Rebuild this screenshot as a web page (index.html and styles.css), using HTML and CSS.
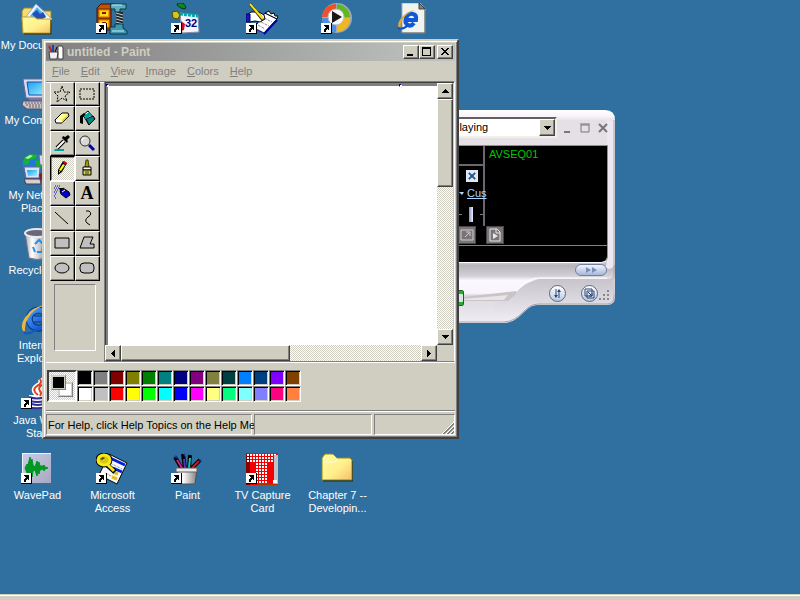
FILE: index.html
```
<!DOCTYPE html>
<html lang="en">
<head>
    <meta charset="UTF-8">
    <meta name="viewport" content="width=device-width, initial-scale=1.0">
    <title>Desktop</title>
    <link rel="stylesheet" href="styles.css">
</head>
<body>

    <svg class="defs" width="0" height="0">
        <defs>
            <linearGradient id="blueGlass" x1="0" y1="0" x2="1" y2="1">
                <stop offset="0" stop-color="#18a0f0"/><stop offset="1" stop-color="#a0f0ff"/>
            </linearGradient>
            <linearGradient id="folderFill" x1="0" y1="0" x2="1" y2="1">
                <stop offset="0" stop-color="#fffca0"/><stop offset=".55" stop-color="#fff08c"/><stop offset="1" stop-color="#f4c068"/>
            </linearGradient>
            <linearGradient id="metal" x1="0" y1="0" x2="1" y2="0">
                <stop offset="0" stop-color="#a8a8a8"/><stop offset=".3" stop-color="#fff"/><stop offset="1" stop-color="#808080"/>
            </linearGradient>
            <linearGradient id="waveFill" x1="0" y1="0" x2="1" y2="1">
                <stop offset="0" stop-color="#c8cce8"/><stop offset="1" stop-color="#a8a8c0"/>
            </linearGradient>
            <linearGradient id="eBlue" x1="0" y1="0" x2="1" y2="1">
                <stop offset="0" stop-color="#48a0f8"/><stop offset="1" stop-color="#0848c8"/>
            </linearGradient>
            <pattern id="holes" width="3" height="3" patternUnits="userSpaceOnUse">
                <rect x="1" y="1" width="2" height="2" fill="#fff" shape-rendering="crispEdges"/>
            </pattern>
            <symbol id="shortcut" viewBox="0 0 11 11">
                <rect width="11" height="11" fill="#000"/>
                <rect width="10" height="10" fill="#fff"/>
                <path d="M3 2h5v5h-1v-1h-1v1h-1v2h-2v-3h1v-1h1v-1h-1v-1h-1z" fill="#000"/>
            </symbol>
            <symbol id="arrow-up" viewBox="0 0 7 4"><path d="M3 0h1v1h1v1h1v1h1v1h-7v-1h1v-1h1v-1h1z"/></symbol>
            <symbol id="arrow-down" viewBox="0 0 7 4"><path d="M0 0h7v1h-1v1h-1v1h-1v1h-1v-1h-1v-1h-1v-1h-1z"/></symbol>
            <symbol id="arrow-left" viewBox="0 0 4 7"><path d="M4 0v7h-1v-1h-1v-1h-1v-1h-1v-1h1v-1h1v-1h1v-1z"/></symbol>
            <symbol id="arrow-right" viewBox="0 0 4 7"><path d="M0 0v7h1v-1h1v-1h1v-1h1v-1h-1v-1h-1v-1h-1v-1z"/></symbol>
        </defs>
    </svg>

    <main class="desktop">
        <div class="column">
            <a class="icon" href="#">
                <svg viewBox="0 0 32 32">
                    <path d="M1 8l2-3h8l2 3h17v10H1z" fill="#f8dc70" stroke="#a08020"/>
                    <path d="M15 1L31 16l-10 6L4 15z" fill="#f0f8ff" stroke="#90a8d8"/>
                    <path d="M16 4l9 9-7 5-9-5z" fill="#50b0f0"/>
                    <path d="M11 11l5-4 3 4 3-2 3 5-7 4z" fill="#2050b8"/>
                    <path d="M1 14h12l3 2h14l-1 14H2z" fill="url(#folderFill)" stroke="#c8a028"/>
                    <path d="M3 31h27V17" fill="none" stroke="#403000"/>
                </svg>
                <span class="label">My&nbsp;Documents</span>
            </a>
            <a class="icon" href="#">
                <svg viewBox="0 0 32 32">
                    <path d="M2 1h26l3 2-2 17H5z" fill="#d8d8f0" stroke="#686890"/>
                    <path d="M6 4h20l-2 13H8z" fill="url(#blueGlass)" stroke="#1850a8"/>
                    <path d="M8 20h16v3H8z" fill="#7878a0"/>
                    <path d="M2 23h28v6l-3 2H6l-5-4z" fill="#d0c8c0" stroke="#504870"/>
                    <path d="M4 25h20M5 27h20M8 29h17" stroke="#605878" stroke-dasharray="2 1"/>
                </svg>
                <span class="label">My Computer</span>
            </a>
            <a class="icon" href="#">
                <svg viewBox="0 0 32 32">
                    <circle cx="11" cy="11" r="10" fill="#2078d8"/>
                    <path d="M3 5l6-4 8 1-3 4-5 1-2 5-5-1zM14 8l5-1 2 6-5 3zM2 15l4 0 2 6-3-1z" fill="#18b030"/>
                    <path d="M4 5l5-3 3 1-5 3z" fill="#b0f8a0"/>
                    <path d="M18 2h13v10H19z" fill="#d8d8f0" stroke="#686890"/>
                    <path d="M3 14h16l-1 11H5z" fill="#e0e0f4" stroke="#686890"/>
                    <path d="M6 17h10v6H7z" fill="url(#blueGlass)"/>
                    <path d="M3 26h16l1 5H5z" fill="#d8d0c8" stroke="#403860"/>
                    <path d="M18 21l6-2-1 8h-4z" fill="#802020"/>
                </svg>
                <span class="label">My Network Places</span>
            </a>
            <a class="icon" href="#">
                <svg viewBox="0 0 32 32">
                    <path d="M4 5l4 25q9 3 16 0l4-25z" fill="url(#metal)" stroke="#707088"/>
                    <ellipse cx="16" cy="5" rx="12" ry="4" fill="#686878" stroke="#e8e8f0" stroke-width="2"/>
                    <path d="M14 16l4-4 4 4M22 18l-1 6-5 0M14 24l-2-5" fill="none" stroke="#2090f0" stroke-width="2"/>
                </svg>
                <span class="label">Recycle Bin</span>
            </a>
            <a class="icon" href="#">
                <svg viewBox="0 0 32 32">
                    <path d="M25 20q-3 6-9 5-7-1-8-9 1-8 9-9 8 0 9 9H12" fill="none" stroke="#08348c" stroke-width="7"/>
                    <path d="M25 20q-3 6-9 5-7-1-8-9 1-8 9-9 8 0 9 9H12" fill="none" stroke="url(#eBlue)" stroke-width="5"/>
                    <path d="M2 28Q-2 20 8 10 16 2 26 2q-10 2-16 9Q3 20 4 28z" fill="#e8b840"/>
                    <path d="M3 30q5 2 13-4" fill="none" stroke="#1058c8" stroke-width="2"/>
                </svg>
                <span class="label">Internet Explorer</span>
            </a>
            <a class="icon" href="#">
                <svg viewBox="0 0 32 32">
                    <path d="M19 1q3 4-3 7-6 4 1 9M23 6q-7 3-4 7 2 2 0 5" fill="none" stroke="#fff" stroke-width="5"/>
                    <path d="M8 17h18l5 2-3 7-4 5H5l3-7z" fill="#fff"/>
                    <path d="M19 1q3 4-3 7-6 4 1 9M23 6q-7 3-4 7 2 2 0 5" fill="none" stroke="#e04020" stroke-width="2"/>
                    <path d="M8 19q8 3 16 0M9 23q8 2 14 0M11 26q6 2 11 0M5 29q14 3 23-1M24 19q7 0 1 6" fill="none" stroke="#303090" stroke-width="2"/>
                    <use href="#shortcut" x="0" y="20" width="11" height="11"/>
                </svg>
                <span class="label">Java Web<br>Start</span>
            </a>
            <a class="icon" href="#">
                <svg viewBox="0 0 32 32">
                    <rect x="1" y="0" width="30" height="31" fill="#606080"/>
                    <rect x="1" y="0" width="29" height="30" fill="#f0f0ff"/>
                    <rect x="2" y="1" width="28" height="29" fill="url(#waveFill)"/>
                    <path d="M4 15L6 11 7 12 9 4 10 8 11 6 12 12 14 14 16 8 17 11 18 9 19 13 22 13 23 12 24 14 27 15 24 16 23 18 22 16 19 17 18 21 17 19 16 23 14 17 12 18 11 24 10 21 9 26 7 19 6 20z" fill="#009820" stroke="#009820"/>
                    <use href="#shortcut" x="0" y="20" width="11" height="11"/>
                </svg>
                <span class="label">WavePad</span>
            </a>
        </div>

        <div class="column">
            <a class="icon" href="#" aria-label="Archive tool">
                <svg viewBox="0 0 32 32">
                    <path d="M1 5l4-4h13l-3 4v22H1z" fill="#c85000" stroke="#401000"/>
                    <path d="M2 6h12v9H2zM2 16h12v9H2z" fill="#f0a000" stroke="#702000"/>
                    <path d="M4 8h8v5H4zM4 18h8v5H4z" fill="#ffd820"/>
                    <path d="M6 10h4M6 20h4" stroke="#702000" stroke-width="2"/>
                    <path d="M14 1h16v5h-6v3h-5V6h-4z" fill="#60b0c0" stroke="#083848"/>
                    <path d="M20 9h7v12h-7z" fill="#202830"/>
                    <path d="M20 10l7 2M20 13l7 2M20 16l7 2M20 19l7 2" stroke="#c0d0d8"/>
                    <path d="M14 24h5v-3h8v4l4 3v3H14z" fill="#4098b0" stroke="#083848"/>
                    <path d="M16 2h10M16 28h12" stroke="#b8f0f8"/>
                    <use href="#shortcut" x="0" y="20" width="11" height="11"/>
                </svg>
            </a>
            <a class="icon" href="#">
                <svg viewBox="0 0 32 32">
                    <path d="M13 1l18 9-10 21-18-9z" fill="#f8f8f8" stroke="#000"/>
                    <path d="M14 5l15 7M17 15l9 4" stroke="#0020e0" stroke-width="3"/>
                    <path d="M14 10l12 6M9 20l8 4" stroke="#a0a0a0" stroke-dasharray="3 1"/>
                    <path d="M17 19l5 2M16 24l5 2" stroke="#e0c020" stroke-width="3"/>
                    <path d="M10 11l9 8M15 18l2-3" stroke="#000" stroke-width="5"/>
                    <ellipse cx="8" cy="7" rx="6" ry="5" fill="none" stroke="#000" stroke-width="5"/>
                    <path d="M10 10l8 8M15 17l2-2" stroke="#f8e818" stroke-width="3"/>
                    <ellipse cx="8" cy="7" rx="6" ry="5" fill="#d8c810" stroke="#f8e818" stroke-width="3"/>
                    <path d="M4 6l3-2 2 1-3 2z" fill="#504800"/>
                    <use href="#shortcut" x="0" y="20" width="11" height="11"/>
                </svg>
                <span class="label">Microsoft Access</span>
            </a>
        </div>

        <div class="column">
            <a class="icon" href="#" aria-label="Calendar">
                <svg viewBox="0 0 32 32">
                    <path d="M23 28h9l-5 3z" fill="#506888"/>
                    <path d="M9 10l18 2 1 17-17 1z" fill="#f4f4ff" stroke="#8890a8"/>
                    <path d="M9 11l18 2" stroke="#00a8a8" stroke-width="3" stroke-dasharray="3 1"/>
                    <path d="M7 0l5 0 3 4-1 2-4-1-4-3z" fill="#108820" stroke="#003808"/>
                    <path d="M1 9l5-1 3 4-2 4-5-1z" fill="#d0c820" stroke="#504800"/>
                    <path d="M10 18l4 3-1 6-3 1z" fill="#c01020"/>
                    <text class="day" x="14" y="24">32</text>
                    <use href="#shortcut" x="0" y="20" width="11" height="11"/>
                </svg>
            </a>
            <a class="icon" href="#">
                <svg viewBox="0 0 32 32">
                    <path d="M11 16L4 4M14 16l-2-15M18 16l1-14M20 16l9-9" stroke="#000" stroke-width="4"/>
                    <path d="M11 15L6 7" stroke="#d02080" stroke-width="2"/>
                    <path d="M14 15l-1-9" stroke="#6030c0" stroke-width="2"/>
                    <path d="M18 15l1-10" stroke="#20c0c0" stroke-width="2"/>
                    <path d="M21 15l7-7" stroke="#c02020" stroke-width="2"/>
                    <path d="M3 4l2-2 2 4zM12 1l2 0 0 3zM28 6l3 1-2 2z" fill="#2030b0"/>
                    <path d="M6 17h20l-2 14H9z" fill="url(#metal)" stroke="#505050"/>
                    <path d="M5 15h21v4H5z" fill="#e8e8e8" stroke="#606060"/>
                    <use href="#shortcut" x="0" y="20" width="11" height="11"/>
                </svg>
                <span class="label">Paint</span>
            </a>
        </div>

        <div class="column">
            <a class="icon" href="#" aria-label="Notes">
                <svg viewBox="0 0 32 32">
                    <path d="M19 10l12 6-13 14-10-5z" fill="#fff" stroke="#000080"/>
                    <path d="M31 17L18 31" stroke="#0000a0" stroke-width="2"/>
                    <path d="M18 15l8 4M15 19l8 4M12 22l7 4" stroke="#909090" stroke-dasharray="3 1"/>
                    <path d="M19 10l4-2 2 3 3-1 1 3 3 0-1 3z" fill="#fff" stroke="#000"/>
                    <path d="M1 12l4-3h8l5 3 1 4-5 3-5-1-5 1-4-2z" fill="#fff" stroke="#000"/>
                    <path d="M0 11h4v8H0z" fill="#1818c0" stroke="#000060"/>
                    <path d="M4 1l13 16" stroke="#302800" stroke-width="3"/>
                    <path d="M4 1l13 15" stroke="#f8e020" stroke-width="2"/>
                    <use href="#shortcut" x="0" y="20" width="11" height="11"/>
                </svg>
            </a>
            <a class="icon" href="#">
                <svg viewBox="0 0 32 32">
                    <rect width="32" height="32" fill="#f00000"/>
                    <rect width="4" height="32" fill="#880000"/>
                    <rect x="0" y="0" width="30" height="9" fill="url(#holes)"/>
                    <rect x="9" y="9" width="12" height="22" fill="url(#holes)"/>
                    <path d="M28 2h4v29h-4z" fill="#c0c0c8"/>
                    <path d="M27 27h4v4h-4z" fill="#fff"/>
                    <path d="M0 0h32M11 31h20" stroke="#806000"/>
                    <use href="#shortcut" x="0" y="20" width="11" height="11"/>
                </svg>
                <span class="label">TV Capture<br>Card</span>
            </a>
        </div>

        <div class="column">
            <a class="icon" href="#" aria-label="Media Player">
                <svg viewBox="0 0 32 32">
                    <circle cx="16" cy="15" r="15" fill="#a0a8b0"/>
                    <path d="M15 14V1A14 14 0 0 0 1 14z" fill="#f05028"/>
                    <path d="M16 14V1A14 14 0 0 1 29 14z" fill="#60b820"/>
                    <path d="M15 15v14A14 14 0 0 1 1 15z" fill="#4890e8"/>
                    <path d="M16 15v14A14 14 0 0 0 29 15z" fill="#f0b820"/>
                    <circle cx="15" cy="14" r="8" fill="#f8f8f8" stroke="#b0b8c0"/>
                    <path d="M11 8l10 6-10 6z" fill="#181818"/>
                    <use href="#shortcut" x="0" y="20" width="11" height="11"/>
                </svg>
            </a>
            <a class="icon" href="#">
                <svg viewBox="0 0 32 32">
                    <path d="M1 27V5l3-4h8l4 4h13l2 2v20z" fill="url(#folderFill)" stroke="#908818"/>
                    <path d="M2 9h12l3-3" fill="none" stroke="#fffce0"/>
                    <path d="M2 28h30V8" fill="none" stroke="#302800"/>
                </svg>
                <span class="label">Chapter 7 --<br>Developin...</span>
            </a>
        </div>

        <div class="column">
            <a class="icon" href="#" aria-label="Web page">
                <svg viewBox="0 0 32 32">
                    <path d="M6 0h18l5 6v24H6z" fill="#f0f4f0" stroke="#b0b0b0"/>
                    <path d="M23 0l6 6h-6z" fill="#808088" stroke="#404040"/>
                    <path d="M29 7v23H6" fill="none" stroke="#606060"/>
                    <path d="M18 20q-3 4-6 2-4-2-2-7 2-5 7-4 4 1 3 6H9" fill="none" stroke="#1058d8" stroke-width="4"/>
                    <path d="M3 25Q0 21 6 14q6-6 13-7-8 3-12 9-3 5-2 9z" fill="#e0a838"/>
                    <path d="M2 25q5 2 10-3" fill="none" stroke="#1050c8" stroke-width="2"/>
                </svg>
            </a>
        </div>

        <section class="player">
            <svg class="skin" viewBox="0 0 200 213">
                <defs>
                    <linearGradient id="skinFill" x1="0" y1="0" x2="0" y2="213" gradientUnits="userSpaceOnUse">
                        <stop offset="0" stop-color="#fff"/>
                        <stop offset=".03" stop-color="#f8f4fa"/>
                        <stop offset=".05" stop-color="#e4e0e6"/>
                        <stop offset=".7" stop-color="#e4e0e8"/>
                        <stop offset=".73" stop-color="#b8b4bc"/>
                        <stop offset=".78" stop-color="#d4d0d6"/>
                        <stop offset=".8" stop-color="#fcf8ff"/>
                        <stop offset=".86" stop-color="#f8f4fc"/>
                        <stop offset=".87" stop-color="#dcd8e0"/>
                        <stop offset="1" stop-color="#f0ecf4"/>
                    </linearGradient>
                    <linearGradient id="podFill" x1="0" y1="0" x2="0" y2="1">
                        <stop offset="0" stop-color="#c4c0c8"/><stop offset="1" stop-color="#f0ecf4"/>
                    </linearGradient>
                </defs>
                <path d="M0 0h190q10 0 10 10v177q0 8-8 8h-69C109 195 106 213 88 213H0z" fill="url(#skinFill)"/>
                <path d="M192 10v142q0 3-3 6l6 1q5-2 5-8V11z" fill="#ece8f2"/>
                <path d="M199 10v177q0 7-7 7h-69C109 194 106 212 88 212H0" fill="none" stroke="#a8a4ac"/>
                <path d="M78 194q14-3 22-11 12-12 24-14h68q6 0 6-4v22q0 6-6 6h-70q-8 0-14 7-8 9-18 11-10 1-12-17z" fill="url(#podFill)"/>
                <path d="M88 190q10-5 16-12 9-10 20-10h68" fill="none" stroke="#fff"/>
                <path d="M48 187l53-6v3l-8 7H48z" fill="#c8c4c8"/>
                <path d="M48 189l45-4-4 5H48z" fill="#e8e4e8"/>
                <g fill="#888">
                    <path d="M192 180h2v2h-2zM192 184h2v2h-2zM188 184h2v2h-2zM192 188h2v2h-2zM188 188h2v2h-2zM184 188h2v2h-2z"/>
                </g>
            </svg>

            <div class="player-head">
                <div class="select">
                    <select aria-label="View"><option>Now Playing</option></select>
                    <span class="select-arrow"><svg class="arrow" width="7" height="4"><use href="#arrow-down"/></svg></span>
                </div>
                <div class="player-buttons">
                    <button aria-label="Minimize"><svg viewBox="0 0 12 12"><path d="M3 10h6" stroke="#777" stroke-width="2"/></svg></button>
                    <button aria-label="Maximize"><svg viewBox="0 0 12 12"><path d="M2 3h8v7H2z" fill="none" stroke="#777"/><path d="M1 2h10" stroke="#777"/></svg></button>
                    <button aria-label="Close"><svg viewBox="0 0 12 12"><path d="M2 2l8 8M10 2l-8 8" stroke="#777" stroke-width="2"/></svg></button>
                </div>
            </div>

            <div class="screen">
                <div class="screen-top">
                    <div class="video">
                        <div class="video-title"></div>
                        <div class="enhance">
                            <button class="enhance-close" aria-label="Close panel"><svg viewBox="0 0 11 11"><path d="M2 2l7 7M9 2l-7 7" stroke="#205080" stroke-width="2"/></svg></button>
                            <a class="custom" href="#"><svg width="5" height="3"><path d="M0 0h5l-2 3z" fill="#a8d8ff"/></svg><u>Cus</u></a>
                            <div class="slider"><span class="tick"></span><span class="thumb"></span><span class="tick"></span></div>
                        </div>
                    </div>
                    <div class="playlist">AVSEQ01</div>
                </div>
                <div class="screen-tools">
                    <button aria-label="Full screen"><svg viewBox="0 0 16 16"><path d="M2 3h12v10H2zM6 10l4-4M7 5h4v4" fill="none" stroke="#d0ccd0"/></svg></button>
                    <button aria-label="Playlist"><svg viewBox="0 0 16 16"><path d="M3 2h7l3 3v9H3zM9 2v4h4" fill="none" stroke="#e8e8e8"/><path d="M6 6l5 3-5 3z" fill="#e8e8e8"/></svg></button>
                </div>
                <div class="screen-status"></div>
            </div>

            <div class="player-foot">
                <button class="fast" aria-label="Fast forward"><svg width="11" height="6"><path d="M0 0l5 3-5 3zM6 0l5 3-5 3z" fill="#7890b8"/></svg></button>
                <div class="foot-row">
                    <span class="volume"></span>
                    <button class="round" aria-label="Equalizer"><svg viewBox="0 0 11 11"><path d="M4 1v8M7 2v8" stroke="#304878" fill="none"/><path d="M2 7h4l-2 3zM5 4h4l-2-3z" fill="#304878"/></svg></button>
                    <button class="round" aria-label="Skin mode"><svg viewBox="0 0 11 11"><path d="M1 1h7v7H1zM3 3h7v7H3zM4 4l4 4M8 5v3H5" fill="none" stroke="#304878"/></svg></button>
                </div>
            </div>
        </section>

        <section class="paint">
            <header class="titlebar">
                <svg class="app-icon" viewBox="0 0 16 16">
                    <path d="M4 8L1 2" stroke="#c02020" stroke-width="2"/>
                    <path d="M5 8V1" stroke="#2040c0" stroke-width="2"/>
                    <path d="M7 8l2-5" stroke="#000"/>
                    <path d="M10 2h4l1 2v11h-5z" fill="#fff" stroke="#404040"/>
                    <path d="M1 8h9l-1 7H2z" fill="#f0f0f0" stroke="#404040"/>
                </svg>
                <h1>untitled - Paint</h1>
                <button aria-label="Minimize"><svg viewBox="0 0 12 10"><path d="M2 7h6v2H2z"/></svg></button>
                <button aria-label="Maximize"><svg viewBox="0 0 12 10"><path d="M1 0h9v9H1zM2 2v6h7V2z" fill-rule="evenodd"/></svg></button>
                <button class="close" aria-label="Close"><svg viewBox="0 0 12 10"><path d="M2 1h2v1h1v1h2v-1h1v-1h2v1h-1v1h-1v1h-1v1h1v1h1v1h1v1h-2v-1h-1v-1h-2v1h-1v1h-2v-1h1v-1h1v-1h1v-1h-1v-1h-1v-1h-1z"/></svg></button>
            </header>

            <nav class="menu">
                <a href="#"><u>F</u>ile</a>
                <a href="#"><u>E</u>dit</a>
                <a href="#"><u>V</u>iew</a>
                <a href="#"><u>I</u>mage</a>
                <a href="#"><u>C</u>olors</a>
                <a href="#"><u>H</u>elp</a>
            </nav>

            <div class="workspace">
                <div class="toolbox">
                    <div class="tools">
                        <button aria-label="Free-form select"><svg viewBox="0 0 16 16"><path d="M8 0l2 6h6l-5 4 2 5-5-3-5 4 1-6-4-4h6z" fill="none" stroke="#000" stroke-dasharray="2 1"/></svg></button>
                        <button aria-label="Select"><svg viewBox="0 0 16 16"><path d="M1 3h14v10H1z" fill="none" stroke="#000" stroke-dasharray="2 1"/></svg></button>
                        <button aria-label="Eraser"><svg viewBox="0 0 16 16"><path d="M1 10l7-7h6l1 3-7 7H2z" fill="#fff" stroke="#000"/><path d="M2 10l7-6h5l-6 6z" fill="#ffff80"/><path d="M8 10v3l6-7V4z" fill="#e0d040"/></svg></button>
                        <button aria-label="Fill"><svg viewBox="0 0 16 16"><path d="M4 5l5-4 7 8-6 6z" fill="#fff" stroke="#000"/><path d="M7 9l7-3 2 3-6 6z" fill="#008080" stroke="#000"/><path d="M1 13V6l4-3 2 2-3 2v7" fill="#000"/><path d="M5 6l5-4 3 3-6 4z" fill="#00a0a0"/></svg></button>
                        <button aria-label="Pick color"><svg viewBox="0 0 16 16"><path d="M1 14h9v2H0z" fill="#00a0a0"/><path d="M3 13l7-7" stroke="#000" stroke-width="4"/><path d="M3 13l7-7" stroke="#fff" stroke-width="2"/><path d="M8 3l5 5 1-2-1-1 3-3-2-2-3 2-2-1z" fill="#000"/></svg></button>
                        <button aria-label="Magnifier"><svg viewBox="0 0 16 16"><path d="M10 10l5 5" stroke="#0000a0" stroke-width="3"/><circle cx="6" cy="6" r="5" fill="#d8d8d8" stroke="#303030"/><path d="M3 6q0-3 3-3" fill="none" stroke="#fff"/></svg></button>
                        <button class="active" aria-label="Pencil"><svg viewBox="0 0 16 16"><path d="M4 15v-5l5-9 4 2-5 9z" fill="#000"/><path d="M5 10l4-6 2 1-4 6z" fill="#ffff00"/><path d="M9 3l1-2 3 2-1 2z" fill="#e00000"/><path d="M5 13v-2h1z" fill="#fff"/></svg></button>
                        <button aria-label="Brush"><svg viewBox="0 0 16 16"><path d="M7 0h2l1 7H6z" fill="#a0a000" stroke="#404000"/><path d="M4 7h8v3H4z" fill="#fff" stroke="#000"/><path d="M4 10h8v5H4z" fill="#d8d060" stroke="#000"/><path d="M7 11v4M9 11v4" stroke="#404000"/></svg></button>
                        <button aria-label="Airbrush"><svg viewBox="0 0 16 16"><path d="M1 1h5M0 3h5M1 5h3M0 7h3M1 9h2M0 11h2M1 13h2" stroke="#0000d0" stroke-dasharray="1 1"/><path d="M6 6l3-3 6 4 1 3-4 3-5-4z" fill="#0000d0" stroke="#000"/><path d="M5 3h3v3H6z" fill="#000"/><path d="M8 7l3-2" stroke="#fff"/></svg></button>
                        <button class="text-tool" aria-label="Text">A</button>
                        <button aria-label="Line"><svg viewBox="0 0 16 16"><path d="M1 2l13 12" stroke="#000"/></svg></button>
                        <button aria-label="Curve"><svg viewBox="0 0 16 16"><path d="M7 1h3q4 3-1 6-4 3-1 6l3 2" fill="none" stroke="#000"/></svg></button>
                        <button aria-label="Rectangle"><svg viewBox="0 0 16 16"><path d="M1 3h14v10H1z" fill="#c0c0c0" stroke="#000"/></svg></button>
                        <button aria-label="Polygon"><svg viewBox="0 0 16 16"><path d="M5 2h9l-3 7h4v4H1z" fill="#c0c0c0" stroke="#000"/></svg></button>
                        <button aria-label="Ellipse"><svg viewBox="0 0 16 16"><ellipse cx="8" cy="8" rx="7" ry="5" fill="#c0c0c0" stroke="#000"/></svg></button>
                        <button aria-label="Rounded rectangle"><svg viewBox="0 0 16 16"><rect x="1" y="3" width="14" height="10" rx="4" fill="#c0c0c0" stroke="#000"/></svg></button>
                    </div>
                    <div class="options"></div>
                </div>

                <div class="view">
                    <div class="canvas">
                        <span class="handle corner"></span>
                        <span class="handle middle"></span>
                        <div class="sheet"></div>
                    </div>
                    <div class="scroll vertical">
                        <button aria-label="Scroll up"><svg class="arrow" width="7" height="4"><use href="#arrow-up"/></svg></button>
                        <div class="scroll-thumb"></div>
                        <div class="track"></div>
                        <button aria-label="Scroll down"><svg class="arrow" width="7" height="4"><use href="#arrow-down"/></svg></button>
                    </div>
                    <div class="scroll horizontal">
                        <button aria-label="Scroll left"><svg class="arrow" width="4" height="7"><use href="#arrow-left"/></svg></button>
                        <div class="scroll-thumb"></div>
                        <div class="track"></div>
                        <button aria-label="Scroll right"><svg class="arrow" width="4" height="7"><use href="#arrow-right"/></svg></button>
                    </div>
                </div>
            </div>

            <div class="palette">
                <div class="current"><span class="back"></span><span class="front"></span></div>
                <div class="swatches">
                    <button aria-label="Color" style="background:#000000"></button>
                    <button aria-label="Color" style="background:#808080"></button>
                    <button aria-label="Color" style="background:#800000"></button>
                    <button aria-label="Color" style="background:#808000"></button>
                    <button aria-label="Color" style="background:#008000"></button>
                    <button aria-label="Color" style="background:#008080"></button>
                    <button aria-label="Color" style="background:#000080"></button>
                    <button aria-label="Color" style="background:#800080"></button>
                    <button aria-label="Color" style="background:#808040"></button>
                    <button aria-label="Color" style="background:#004040"></button>
                    <button aria-label="Color" style="background:#0080ff"></button>
                    <button aria-label="Color" style="background:#004080"></button>
                    <button aria-label="Color" style="background:#8000ff"></button>
                    <button aria-label="Color" style="background:#804000"></button>
                    <button aria-label="Color" style="background:#ffffff"></button>
                    <button aria-label="Color" style="background:#c0c0c0"></button>
                    <button aria-label="Color" style="background:#ff0000"></button>
                    <button aria-label="Color" style="background:#ffff00"></button>
                    <button aria-label="Color" style="background:#00ff00"></button>
                    <button aria-label="Color" style="background:#00ffff"></button>
                    <button aria-label="Color" style="background:#0000ff"></button>
                    <button aria-label="Color" style="background:#ff00ff"></button>
                    <button aria-label="Color" style="background:#ffff80"></button>
                    <button aria-label="Color" style="background:#00ff80"></button>
                    <button aria-label="Color" style="background:#80ffff"></button>
                    <button aria-label="Color" style="background:#8080ff"></button>
                    <button aria-label="Color" style="background:#ff0080"></button>
                    <button aria-label="Color" style="background:#ff8040"></button>
                </div>
            </div>

            <footer class="status">
                <div class="pane help">For Help, click Help Topics on the Help Me</div>
                <div class="pane position"></div>
                <div class="pane size">
                    <svg width="12" height="12"><path d="M0 12L12 0M4 12l8-8M8 12l4-4" stroke="#fff"/><path d="M1 12L12 1M2 12L12 2M5 12l7-7M6 12l6-6M9 12l3-3M10 12l2-2" stroke="#808080"/></svg>
                </div>
            </footer>
        </section>
    </main>

    <div class="taskbar"></div>

</body>
</html>
```
FILE: styles.css
```
* {
    box-sizing: border-box;
}

body {
    margin: 0;
    min-height: 100vh;
    display: flex;
    flex-direction: column;
    background-color: #3070a0;
    font-family: "Liberation Sans", Arial, sans-serif;
    font-size: 11px;
    line-height: 13px;
    overflow: hidden;
}

button {
    display: flex;
    align-items: center;
    justify-content: center;
    padding: 0;
    border: 0;
    background: none;
    color: #000;
    font: inherit;
}

svg {
    display: block;
    flex-shrink: 0;
}

a {
    color: inherit;
    text-decoration: none;
}

.defs {
    position: absolute;
}

/* desktop icons */
.desktop {
    position: relative;
    flex: 1;
    display: flex;
    align-items: flex-start;
    padding-top: 3px;
}

.column {
    width: 75px;
    height: 525px;
    display: flex;
    flex-direction: column;
    justify-content: space-between;
}

.icon {
    height: 75px;
    color: #fff;
    text-align: center;
}

.icon svg {
    width: 32px;
    height: 32px;
    margin: 0 22px 4px 21px;
}

.label {
    display: block;
}

.day {
    font-size: 11px;
    font-weight: bold;
    fill: #000080;
}

.taskbar {
    height: 6px;
    background-color: #d0cec0;
    border-top: 1px solid #d0cec0;
    box-shadow: inset 0 1px #fff;
}

/* media player */
.player {
    position: absolute;
    left: 415px;
    top: 110px;
    width: 200px;
}

.skin {
    position: absolute;
    left: 0;
    top: 0;
    width: 200px;
    height: 213px;
}

.player-head {
    position: relative;
    height: 35px;
    display: flex;
    align-items: center;
    gap: 4px;
    padding-right: 6px;
}

.player-buttons {
    display: flex;
    gap: 6px;
}

.player-head button,
.player-head button svg {
    width: 12px;
    height: 12px;
}

.select {
    position: relative;
    flex: 1;
}

.select select {
    display: block;
    appearance: none;
    width: 100%;
    height: 21px;
    padding: 0 0 0 10px;
    border: 2px solid;
    border-color: #606060 #f0f0e8 #f0f0e8 #606060;
    border-radius: 0;
    background-color: #fff;
    color: #000;
    font: inherit;
}

.select-arrow {
    position: absolute;
    right: 2px;
    top: 2px;
    width: 16px;
    height: 17px;
    display: flex;
    align-items: center;
    justify-content: center;
    background-color: #d0cec0;
    border: 1px solid;
    border-color: #fff #404040 #404040 #fff;
    box-shadow: inset -1px -1px #808080;
    pointer-events: none;
}

.screen {
    position: relative;
    height: 118px;
    margin-right: 7px;
    display: flex;
    flex-direction: column;
    background-color: #000;
    border-top: 1px solid #909090;
    border-right: 1px solid #909090;
    border-bottom: 1px solid #fff;
    border-radius: 0 0 7px 0;
}

.screen-top {
    height: 80px;
    display: flex;
}

.video {
    width: 70px;
    border-right: 2px solid #6c6670;
}

.video-title {
    height: 20px;
    border-bottom: 2px solid #6c6670;
}

.enhance {
    display: flex;
    flex-direction: column;
    padding: 4px 0 0 44px;
}

.enhance-close {
    width: 12px;
    height: 12px;
    margin-left: 7px;
    background-color: #e0e8f8;
}

.enhance-close svg {
    width: 10px;
    height: 10px;
}

.custom {
    display: flex;
    align-items: center;
    gap: 3px;
    margin-top: 5px;
    color: #a8d8ff;
}

.slider {
    display: flex;
    align-items: center;
    gap: 7px;
    margin-top: 7px;
}

.tick {
    width: 3px;
    height: 1px;
    background-color: #808080;
}

.thumb {
    width: 4px;
    height: 15px;
    background: linear-gradient(90deg, #8888c8, #f0f0ff);
}

.playlist {
    padding: 2px 4px;
    color: #00c800;
}

.screen-tools {
    height: 20px;
    display: flex;
    gap: 10px;
    padding-left: 43px;
    border-bottom: 1px solid #808080;
}

.screen-tools button {
    width: 18px;
    height: 18px;
    background-color: #787478;
    border: 1px solid #484448;
}

.screen-tools svg {
    width: 16px;
    height: 16px;
}

.player-foot {
    position: relative;
    display: flex;
    flex-direction: column;
    align-items: flex-end;
    padding: 1px 8px 0 0;
}

.fast {
    width: 32px;
    height: 12px;
    border: 1px solid #7080a0;
    border-radius: 6px;
    background: linear-gradient(#f0f4ff, #a8b8d8);
}

.foot-row {
    display: flex;
    align-items: center;
    gap: 15px;
    margin: 4px 9px 0 0;
}

.round {
    width: 17px;
    height: 17px;
    border: 1px solid #586888;
    border-radius: 50%;
    background: linear-gradient(#fff, #b8c8e0);
}

.round svg {
    width: 11px;
    height: 11px;
}

.volume {
    width: 10px;
    height: 16px;
    margin: 10px 70px 0 0;
    background-color: #d8e8e0;
    border: 1px solid #206020;
    border-radius: 2px;
    box-shadow: inset 0 3px #20b020, inset 0 -3px #20b020;
}

/* paint window */
.paint {
    position: absolute;
    left: 42px;
    top: 39px;
    width: 417px;
    padding: 2px;
    background-color: #d0cec0;
    border: 2px solid;
    border-color: #d0cec0 #404040 #404040 #d0cec0;
    box-shadow: inset 1px 1px #fff, inset -1px -1px #808080;
}

.titlebar {
    height: 18px;
    display: flex;
    align-items: center;
    padding: 0 2px;
    background: linear-gradient(90deg, #808080, #c0c4c0);
}

.app-icon {
    width: 16px;
    height: 16px;
}

.titlebar h1 {
    flex: 1;
    margin: 0 0 0 3px;
    color: #d0cec0;
    font-size: 12px;
}

.titlebar button {
    width: 16px;
    height: 14px;
    background-color: #d0cec0;
    border: 1px solid;
    border-color: #fff #404040 #404040 #fff;
    box-shadow: inset -1px -1px #808080;
}

.titlebar button svg {
    width: 12px;
    height: 10px;
}

.titlebar .close {
    margin-left: 2px;
}

.menu {
    height: 20px;
    display: flex;
    align-items: center;
    gap: 11px;
    padding-left: 6px;
    color: #808080;
}

.workspace {
    display: flex;
    height: 282px;
    border-bottom: 1px solid #fff;
    box-shadow: inset 0 1px #808080, inset 0 2px #fff;
}

.toolbox {
    width: 58px;
    padding: 1px 4px 0;
}

.tools {
    display: grid;
    grid-template-columns: 25px 25px;
    grid-template-rows: 24px;
    grid-auto-rows: 25px;
}

.tools button {
    padding: 0 1px 1px 0;
    border: 1px solid;
    border-color: #fff #000 #000 #fff;
    box-shadow: inset -1px -1px #808080;
}

.tools svg {
    width: 16px;
    height: 16px;
    overflow: visible;
}

.tools .active {
    border-color: #000 #fff #fff #000;
    box-shadow: inset 1px 1px #808080;
    background: repeating-conic-gradient(#fff 0 25%, #d0cec0 0 50%) 0 0 / 2px 2px;
}

.tools .text-tool {
    font-family: "Liberation Serif", "Times New Roman", serif;
    font-size: 18px;
    font-weight: bold;
}

.options {
    width: 42px;
    height: 67px;
    margin: 3px 0 0 4px;
    border: 1px solid;
    border-color: #808080 #fff #fff #808080;
}

.view {
    flex: 1;
    display: grid;
    grid-template-columns: 1fr 16px;
    grid-template-rows: 1fr 16px;
    padding: 1px 1px 0 0;
    border: 1px solid;
    border-color: #808080 #fff #808080 #808080;
    box-shadow: inset 1px 1px #404040;
}

.canvas {
    position: relative;
    padding: 3px 0 0 3px;
    background-color: #808080;
    box-shadow: inset 1px 0 #404040;
}

.sheet {
    height: 100%;
    background-color: #fff;
}

/* resize handles of the sheet */
.handle {
    position: absolute;
    top: 1px;
    width: 3px;
    height: 3px;
    background-color: #fff;
    border: 1px solid;
    border-color: #000080 #fff #fff #000080;
}

.corner {
    left: 1px;
}

.middle {
    left: 294px;
}

.scroll {
    display: flex;
    background: repeating-conic-gradient(#fff 0 25%, #d0cec0 0 50%) 0 0 / 2px 2px;
}

.vertical {
    flex-direction: column;
}

.scroll button {
    flex: 0 0 16px;
    height: 16px;
}

.scroll button,
.scroll-thumb {
    background-color: #d0cec0;
    border: 1px solid;
    border-color: #fff #404040 #404040 #fff;
    box-shadow: inset -1px -1px #808080;
}

.vertical .scroll-thumb {
    height: 88px;
}

.horizontal .scroll-thumb {
    width: 169px;
}

.track {
    flex: 1;
}

.palette {
    display: flex;
    height: 49px;
    padding: 7px 0 0 1px;
    border-bottom: 1px solid #fff;
    box-shadow: inset 0 -1px #808080;
}

.current {
    position: relative;
    width: 30px;
    height: 32px;
    border: 2px solid;
    border-color: #404040 #fff #fff #404040;
    background: repeating-conic-gradient(#fff 0 25%, #d0cec0 0 50%) 0 0 / 2px 2px;
}

.front,
.back {
    position: absolute;
    width: 15px;
    height: 15px;
    border: 1px solid;
    border-color: #d0cec0 #808080 #808080 #d0cec0;
    box-shadow: inset 0 0 0 1px #d0cec0;
}

.front {
    left: 2px;
    top: 3px;
    background-color: #000;
}

.back {
    left: 9px;
    top: 10px;
    background-color: #fff;
}

.swatches {
    display: grid;
    grid-template-columns: repeat(14, 16px);
    grid-auto-rows: 16px;
}

.swatches button {
    border: 1px solid;
    border-color: #808080 #fff #fff #808080;
    box-shadow: inset 1px 1px #000, inset -1px -1px #d0cec0;
}

.status {
    display: flex;
    gap: 2px;
    padding-top: 2px;
}

.pane {
    height: 21px;
    border: 1px solid;
    border-color: #808080 #fff #fff #808080;
}

.help {
    width: 206px;
    padding: 4px 0 0 1px;
    white-space: nowrap;
}

.position {
    width: 118px;
}

.size {
    flex: 1;
    display: flex;
    align-items: flex-end;
    justify-content: flex-end;
}
```
